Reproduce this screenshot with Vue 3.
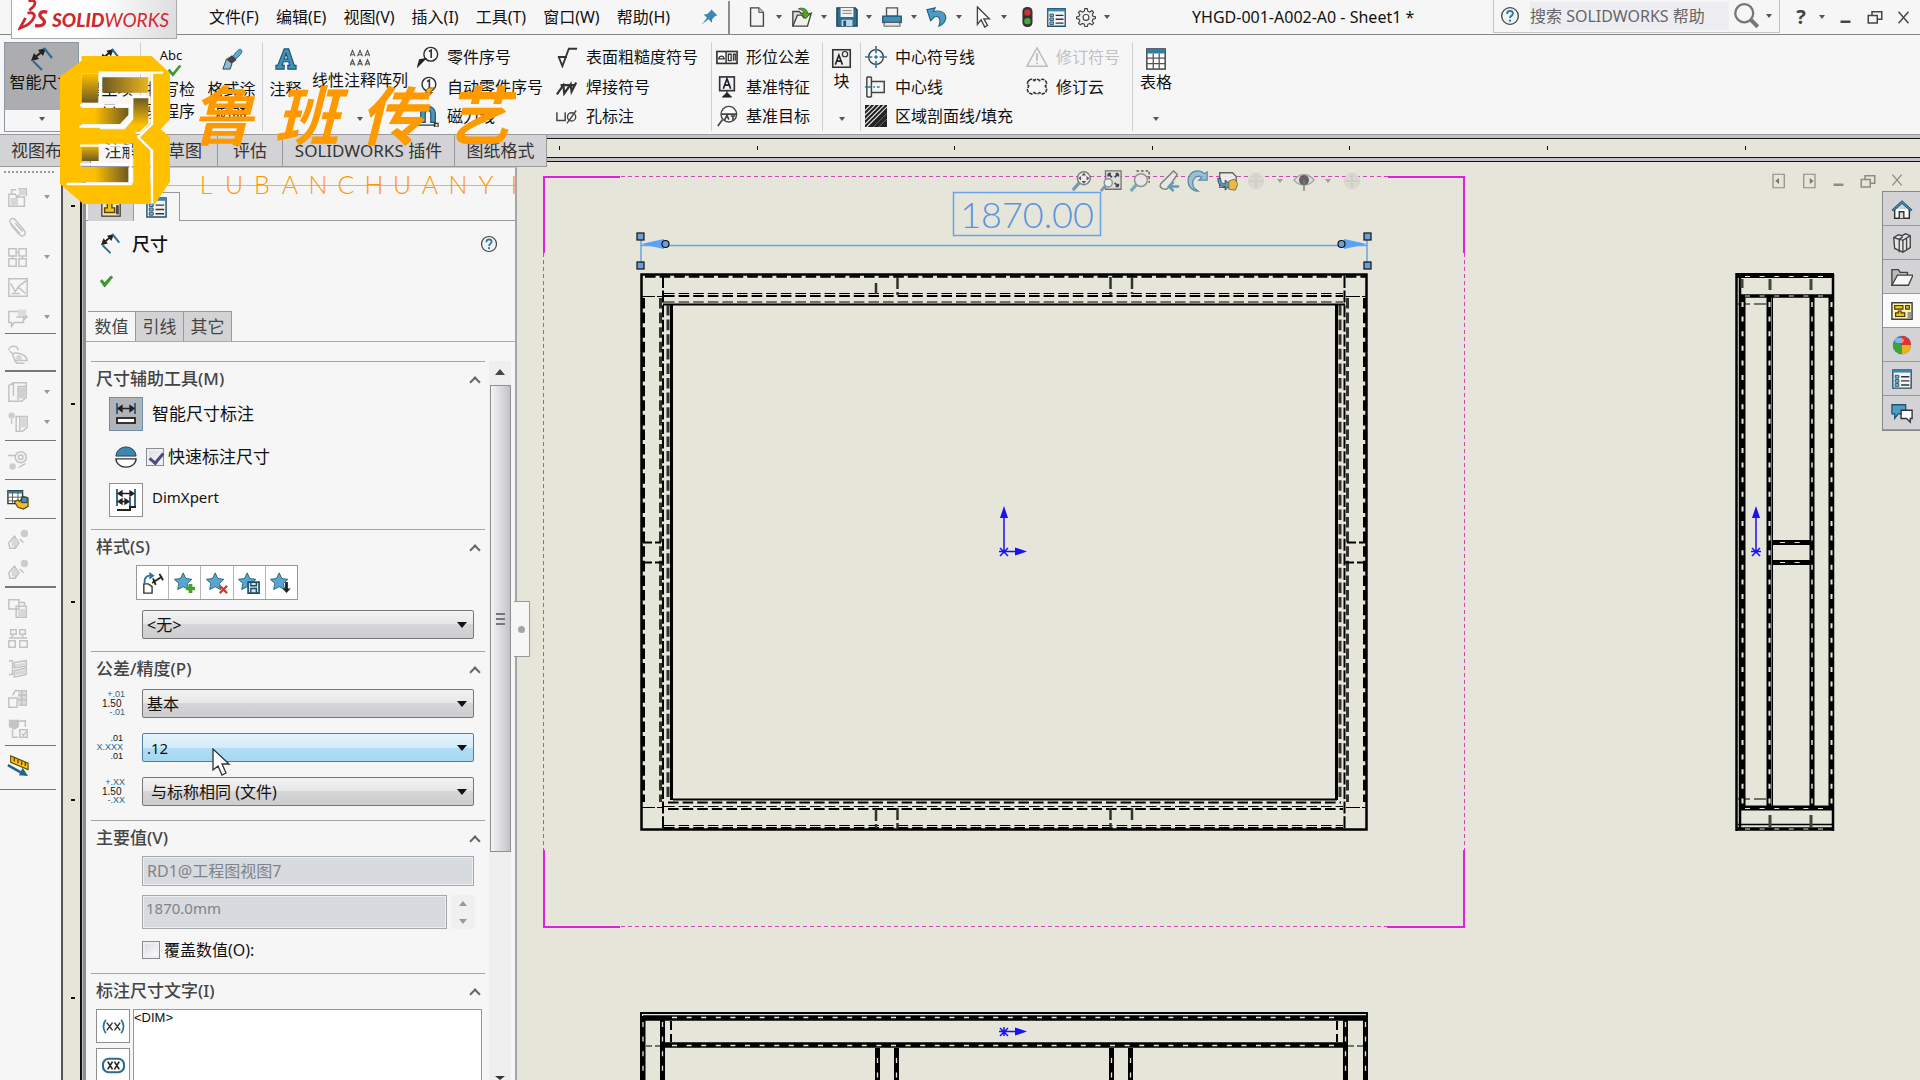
<script setup>
import { h } from 'vue'

const G = 'fill="none" stroke="#c2c2c4" stroke-width="1.6"'
const STAR = '<path d="M10 1l3 6.200 6.500.8-4.800 4.600 1.300 6.600L10 16l-6 3.200 1.300-6.600L.5 8 7 7.200z" fill="#58a6d0" stroke="#24617f" stroke-width="1"/>'
const icons = {
  pin: '<path d="M14 2l8 8-3 .5-4 4-.5 5-4.500-4.500L1 22l7-9-4.500-4.500 5-.5 4-4z" fill="#3f86b4"/>',
  new: '<path d="M5 2h9l5 5v15H5z" fill="#f4f4f4" stroke="#444" stroke-width="1.500"/><path d="M14 2v5h5" fill="#ccc" stroke="#444"/>',
  open: '<path d="M2 22V6h7l2 2h4v4" fill="#ddd" stroke="#444" stroke-width="1.500"/><path d="M2 22l5-12h5l2 3 8-5-4 14z" fill="#f1f1ee" stroke="#444" stroke-width="1.500"/><path d="M8 3c6-2 10 1 10 5h3l-5 6-5-6h3c0-3-3-4-6-5z" fill="#5aa02c" stroke="#2f6b12"/>',
  save: '<path d="M1 2h20l2 2v18H1z" fill="#2c6f92" stroke="#1d4358" stroke-width="1.500"/><path d="M5 2h14v10H5z" fill="#f2f2f2"/><path d="M7 5h10M7 8h10" stroke="#777"/><path d="M6 15h12v7H6z" fill="#b9d6e4"/><path d="M8 16h3v6H8z" fill="#24536b"/>',
  print: '<path d="M6 2h12v9H6z" fill="#f5f5f5" stroke="#555" stroke-width="1.500"/><path d="M2 11h20v7H2z" fill="#3f8fb8" stroke="#205470" stroke-width="1.500"/><path d="M4 18h16l1 4H3z" fill="#e6e6e6" stroke="#555"/>',
  undo: '<path d="M1 4l4 12 4-4c5-2 8 2 5 10 11-4 11-19-6-16l2-4z" fill="#4d9ac2" stroke="#235f80" stroke-width="1.200"/>',
  cursor: '<path d="M7 1v19l4-5 4 8 3-2-4-7h6z" fill="#fff" stroke="#444" stroke-width="1.500"/>',
  light: '<rect x="7" y="1" width="11" height="22" rx="5" fill="#333"/><circle cx="12.500" cy="7" r="3.500" fill="#d03030"/><circle cx="12.500" cy="16.500" r="3.500" fill="#4aa83a"/>',
  list: '<path d="M2 2h20v20H2z" fill="#f4f4f4" stroke="#24506a" stroke-width="1.500"/><path d="M2 2h20v3H2z" fill="#3b87ac"/><path d="M4.500 8h4v3h-4zM4.500 12.500h4v3h-4zM4.500 17h4v3h-4z" fill="#7fb9d6" stroke="#24506a"/><path d="M11 9.500h9M11 14h9M11 18.500h9" stroke="#333" stroke-width="1.500"/>',
  gear: '<path d="M10.500 2h3l.6 3 2.400 1 2.600-1.700 2 2L19.500 9l1 2.200 3 .6v2l-3 .7-1 2.300 1.700 2.600-2 2-2.700-1.600-2.300 1-.6 2.700h-3l-.6-2.800-2.300-1L5 21.400l-2-2 1.600-2.600-1-2.300-3-.6v-2l3-.7 1-2.200L3 6.400l2-2L7.600 6 10 5z" fill="#eee" stroke="#444" stroke-width="1.400"/><circle cx="12" cy="12.500" r="3.500" fill="#fff" stroke="#444" stroke-width="1.400"/>',
  help: '<circle cx="12" cy="12" r="10" fill="#eef4f7" stroke="#444" stroke-width="1.600"/><path d="M8.500 9.500c0-5 7-4.500 7-.5 0 2.500-3.500 3-3.500 5.500" fill="none" stroke="#2c7399" stroke-width="2.200"/><circle cx="12" cy="17.500" r="1.400" fill="#2c7399"/>',
  mag: '<circle cx="10" cy="10" r="8" fill="none" stroke="#777" stroke-width="2"/><path d="M16 16l6 6" stroke="#777" stroke-width="3.500"/>',
  smart: '<path d="M3 12L14 3" stroke="#222" stroke-width="2.200"/><path d="M1 14l3-8 5 6zM16 1l-3 8-5-6z" fill="#222"/><path d="M14 1l8 10M3 14l9 9" stroke="#2c6e92" stroke-width="2.200"/>',
  abc: '<path d="M8 14l5 6 9-11" fill="none" stroke="#3f9a2f" stroke-width="3.200"/>',
  brush: '<path d="M22 2c-1-2-4 0-9 7l3 3c6-5 8-8 6-10z" fill="#5aa9cf" stroke="#235b78"/><path d="M12 8l5 5-5 4-6-5z" fill="#444"/><path d="M6 12l6 5-2 6H2z" fill="#86bedb" stroke="#333"/>',
  note: '<path d="M10 1h5l6 18h2v4h-9v-4h2l-1-4H9l-1 4h2v4H1v-4h2zM12 6l-2 6h4z" fill="#3f93b8" stroke="#1d5068" stroke-width="1.200"/>',
  pat: '<path d="M0 10l3-7 3 7M1 8h4M9 10l3-7 3 7M10 8h4M18 10l3-7 3 7M19 8h4M0 21l3-7 3 7M1 19h4M9 21l3-7 3 7M10 19h4M18 21l3-7 3 7M19 19h4" fill="none" stroke="#555" stroke-width="1.300"/>',
  bal: '<circle cx="15" cy="9" r="7.500" fill="#fff" stroke="#333" stroke-width="1.600"/><path d="M13 6l2.500-1.500V13" fill="none" stroke="#333" stroke-width="1.800"/><path d="M9 14l-8 8 2-7z" fill="#222" stroke="#222" stroke-width="1.500"/>',
  abal: '<circle cx="13" cy="9" r="7.500" fill="#fff" stroke="#333" stroke-width="1.600"/><path d="M11 6l2.500-1.500V13" fill="none" stroke="#333" stroke-width="1.800"/><path d="M12 13h7l-5 5h3l-7 6 2-6H9z" fill="#f3b52c" stroke="#8a5a10"/>',
  magnet: '<path d="M4 19V9c0-10 16-10 16 0v10h-5V9c0-4-6-4-6 0v10z" fill="#4b97bb" stroke="#24536b" stroke-width="1.300"/><path d="M1 22h20M19 20h4v4h-4z" fill="#fff" stroke="#333" stroke-width="1.300"/>',
  surf: '<path d="M2 12h10M3 12l4 10 7-19h9" fill="none" stroke="#333" stroke-width="2"/>',
  weld: '<path d="M1 20l7-10 1 9 7-10 1 8 5-10M5 10h16" fill="none" stroke="#333" stroke-width="2.400"/>',
  hole: '<path d="M1 8v9h9V8" fill="none" stroke="#444" stroke-width="1.600"/><circle cx="17" cy="13" r="4.500" fill="none" stroke="#444" stroke-width="1.500"/><path d="M12 20L22 6" stroke="#444" stroke-width="1.500"/>',
  gtol: '<rect x="1" y="6" width="22" height="13" fill="#fff" stroke="#333" stroke-width="1.800"/><path d="M11 6v13" stroke="#333" stroke-width="1.600"/><path d="M3 14c1-4 5-4 6 0zM13.500 9h3v7h-3zM19 16V9h2v7" fill="none" stroke="#333" stroke-width="1.400"/>',
  datum: '<rect x="4" y="1" width="16" height="15" fill="#eef" stroke="#333" stroke-width="1.800"/><path d="M8 14l4-11 4 11M9 10h6" fill="none" stroke="#222" stroke-width="1.800"/><path d="M12 16v3M7 23l5-5 5 5z" fill="#222" stroke="#222"/>',
  target: '<circle cx="14" cy="10" r="8.500" fill="#fff" stroke="#444" stroke-width="1.500"/><path d="M6 10h17M9 17l3-6 2 5M16 12h5M18.500 12v5M7 16l-5 7" fill="none" stroke="#444" stroke-width="1.800"/>',
  block: '<rect x="2" y="2" width="20" height="20" fill="#eee" stroke="#333" stroke-width="1.800"/><path d="M5 19l4-11 4 11M6 15h6" fill="none" stroke="#222" stroke-width="1.800"/><circle cx="16" cy="7" r="3" fill="none" stroke="#333" stroke-width="1.400"/>',
  cmark: '<circle cx="12" cy="12" r="8" fill="none" stroke="#3a3a3a" stroke-width="1.500"/><path d="M12 0v8M12 16v8M0 12h8M16 12h8M12 10v4M10 12h4" stroke="#2b78a0" stroke-width="1.800"/>',
  cline: '<path d="M2 1v22M7 1v22M2 1h5M2 23h5M7 6h14v12H7" fill="none" stroke="#444" stroke-width="1.600"/><path d="M0 12h16" stroke="#2b78a0" stroke-width="1.500" stroke-dasharray="7 2 2 2"/>',
  hatch: '<rect width="24" height="24" fill="#222"/><path d="M0 6L6 0M0 11L11 0M0 16L16 0M0 21L21 0M2 24L24 2" stroke="#eee" stroke-width="1.200"/><path d="M9 24L24 9M15 24l9-9" stroke="#777" stroke-width="1"/>',
  warn: '<path d="M12 2l11 20H1z" fill="none" stroke="#bdbdbd" stroke-width="1.600"/><path d="M12 8v8M12 18v2" stroke="#bdbdbd" stroke-width="2"/>',
  cloud: '<path d="M3 5c2-2 4-2 6 0 2-2 4-2 6 0 2-2 4-2 6 0 2 2 2 4 0 6 2 2 2 5 0 7-2 2-4 2-6 0-2 2-4 2-6 0-2 2-4 2-6 0-2-2-2-4 0-7-2-2-2-4 0-6z" fill="none" stroke="#333" stroke-width="1.700" stroke-dasharray="4 1"/>',
  table: '<rect x="2" y="1" width="20" height="22" fill="#fff" stroke="#444" stroke-width="1.600"/><rect x="2" y="1" width="20" height="5" fill="#2d7fa6"/><path d="M2 11h20M2 17h20M9 6v17M15.500 6v17" stroke="#555" stroke-width="1.400"/>',
  tree: '<rect x="2" y="2" width="20" height="20" fill="#f6e9b0" stroke="#444" stroke-width="1.500"/><path d="M8 6h5v7h3v5H5v-5h3z" fill="#f2c21b" stroke="#5a4500" stroke-width="1.500"/><path d="M19 10v10" stroke="#444" stroke-width="3"/>',
  ok: '<path d="M2 11l3-2 4 5L19 3l3 2L9 21z" fill="#3c9f2c" stroke="#2a7a1d"/>',
  dimA: '<path d="M3 1v11M21 1v11" stroke="#2b5a78" stroke-width="1.800"/><path d="M4 6.500h16M4 6.500l4-3v6zM20 6.500l-4-3v6z" fill="#222" stroke="#222" stroke-width="1.300"/><rect x="3" y="16" width="18" height="5" fill="#fff" stroke="#222" stroke-width="1.800"/>',
  dimB: '<path d="M3 1v17M21 1v18M16 9v9" stroke="#2b5a78" stroke-width="1.800"/><path d="M4 5.500h16M4 5.500l4-2.500v5zM20 5.500l-4-2.500v5zM4 13.500h11M4 13.500l4-2.500v5zM15 13.500l-4-2.500v5z" fill="#222" stroke="#222" stroke-width="1.300"/><path d="M3 22h13v-3h6" fill="none" stroke="#222" stroke-width="2"/>',
  half: '<path d="M1 11a11 10 0 0122 0z" fill="#3c87aa" stroke="#235"/><path d="M1 14h22a11 9 0 01-22 0z" fill="#fff" stroke="#333" stroke-width="1.500"/>',
  s1: '<path d="M3 12C2 6 6 3 11 4M8 1l4 3-4 3" fill="none" stroke="#2c7399" stroke-width="2"/><path d="M2 13h5l4 3v7H2z" fill="#fff" stroke="#333" stroke-width="1.500"/><path d="M11 12L22 5M12 7l3 7M19 2l4 7" stroke="#222" stroke-width="2"/>',
  s2: STAR + '<path d="M16 13h4v3h3v4h-3v3h-4v-3h-3v-4h3z" fill="#4aa02c"/>',
  s3: STAR + '<path d="M15 15l8 8M23 15l-8 8" stroke="#d43a24" stroke-width="2.500"/>',
  s4: STAR + '<path d="M11 11h12v12H11z" fill="#cfe2ee" stroke="#1f4d68" stroke-width="1.800"/><path d="M14 11v4h6v-4M14 23v-5h6v5" fill="none" stroke="#1f4d68" stroke-width="1.500"/>',
  s5: STAR + '<path d="M18 11v8" stroke="#222" stroke-width="3"/><path d="M13.500 18h9L18 23z" fill="#222"/>',
  px: '<path d="M4 5q-5 7 0 14M20 5q5 7 0 14" fill="none" stroke="#2c7399" stroke-width="1.800"/><path d="M5 8l6 8M11 8l-6 8M13 8l6 8M19 8l-6 8" stroke="#333" stroke-width="1.500"/>',
  bx: '<rect x="1" y="5" width="22" height="14" rx="6" fill="none" stroke="#2c6e92" stroke-width="2.200"/><path d="M6 8l5 8M11 8l-5 8M13 8l5 8M18 8l-5 8" stroke="#222" stroke-width="1.700"/>',
  home: '<path d="M4 12v10h16V12" fill="#fff" stroke="#333" stroke-width="1.600"/><path d="M1 13L12 3l11 10-2 1-9-8-9 8z" fill="#3b8fb5" stroke="#1d4a61"/><path d="M9 22v-7h5v7" fill="#ddd" stroke="#333" stroke-width="1.500"/>',
  books: '<path d="M3 6l5-3 4 1 4-2 5 2v13l-8 5-9-4z" fill="#e8e8e8" stroke="#444" stroke-width="1.500"/><path d="M3 6l6 2v14M9 8l4-3M13 9v13M9 8l4 1 8-5M17 6v13" fill="none" stroke="#444" stroke-width="1.500"/>',
  folder: '<path d="M1 21V4h7l2 3h8v4" fill="#bbb" stroke="#444" stroke-width="1.500"/><path d="M1 21L7 10h17l-5 11z" fill="#f7f7f7" stroke="#444" stroke-width="1.500"/>',
  pal: '<rect x="1" y="3" width="22" height="18" fill="#fff3c0" stroke="#333" stroke-width="1.500"/><path d="M4 6h9v4H4zM16 6h4v4h-4zM5 18v-4h3v-2h3v2h4v4z" fill="#f0bf1a" stroke="#4b3a00" stroke-width="1.300"/><path d="M18 13h4v7h-4z" fill="#999"/>',
  ball: '<circle cx="12" cy="12" r="10" fill="#2f78c4"/><path d="M12 12V2a10 10 0 0110 10z" fill="#d33"/><path d="M12 12h10a10 10 0 01-10 10z" fill="#e9b41e"/><path d="M12 12v10A10 10 0 012.500 9z" fill="#3fa23a"/><ellipse cx="9" cy="7" rx="5" ry="3" fill="#fff" opacity=".45"/>',
  chat: '<path d="M1 3h15v10H8l-4 5v-5H1z" fill="#4d9fc8" stroke="#205470" stroke-width="1.400"/><path d="M11 9h12v9h-2v4l-4-4h-6z" fill="#fff" stroke="#333" stroke-width="1.500"/>',
  g1: `<path d="M2 9h7l2 3h8v10H2zM12 3h9v8M9 14l6-6M5 9V4h5" ${G}/><path d="M4 13h8v8H4zM13 4h7v6h-7z" fill="#d6d6d8"/>`,
  g2: `<path d="M4 9l9 11c4 4 9 0 6-4L9 4C6 1 1 4 4 8l10 11M9 8l8 9" ${G}/>`,
  g3: `<path d="M2 3h8v8H2zM13 3h8v8h-8zM2 14h8v8H2zM13 14h8v8h-8zM10 7h3M6 11v3M17 11v3" ${G}/>`,
  g4: `<path d="M2 3h20v19H2zM4 8l5 9 4-6 8-6M12 12l8 7M5 19h9" ${G}/>`,
  g5: `<path d="M2 6h12l4 4v8H8l-3 4v-4H2zM10 12h11M17 7l5 5-5 4" ${G}/><path d="M12 4h9v7h-9z" fill="#dcdcde"/>`,
  g6: `<path d="M2 8c0-6 10-6 10 0M3 9l4 3M6 13c0-4 15-2 16 6H9zM8 19l3 3h8" ${G}/><circle cx="13" cy="16" r="3" fill="#d5d5d7"/>`,
  g7: `<path d="M2 5l5-3h14v16l-5 4H2zM7 2v14M12 6h9M12 10h9M12 6v15" ${G}/><path d="M13 7h7v12h-7z" fill="#d0d0d3"/>`,
  g8: `<circle cx="5" cy="5" r="3.500" fill="#cfcfd2"/><path d="M10 6h12v12l-5 4h-7zM14 6v15M5 9v5" ${G}/><path d="M15 7h6v11h-6z" fill="#d8d8da"/>`,
  g9: `<circle cx="15" cy="9" r="6" ${G}/><circle cx="15" cy="9" r="2.500" ${G}/><circle cx="6" cy="19" r="3.500" fill="#ccc"/><path d="M1 7h8M13 20l7-4" ${G}/>`,
  g10: `<circle cx="19" cy="6" r="4" fill="#ccc"/><path d="M2 16l6-7 5 7-4 6H3zM9 9v12M14 12l4 4" ${G}/><path d="M5 14l4-3 3 5-3 4H5z" fill="#d8d8da"/>`,
  g11: `<path d="M2 3h11v10H2zM10 10h11v12H10zM13 6h6v4" ${G}/><path d="M12 13h8v8h-8z" fill="#d8d8da"/>`,
  g12: `<path d="M4 3h6v5H4zM14 3h6v5h-6zM2 12h20M6 8v4M17 8v4M2 15h7v7H2zM14 15h8v7h-8z" ${G}/>`,
  g13: `<path d="M2 4h4v15H2M8 6l13-2v6L8 12zM8 15l13-3v7L8 22z" ${G}/><path d="M9 8l11-2v3L9 11zM9 16l11-2v4L9 20z" fill="#d8d8da"/>`,
  g14: `<path d="M2 12h9v10H2zM9 4h12v16h-8M6 9l4-6M12 9h9M12 14h9M16 4v16" ${G}/><path d="M12 5h8v14h-8z" fill="#c2c2c4" opacity=".5"/>`,
  g15: `<path d="M2 3h11v8l-5 3-6-3z" fill="#c4c4c6"/><path d="M11 5l9-1v7M6 14v8h6M14 14h8v8h-8zM16 18l2 2 3-4" ${G}/>`,
  tcfg: '<path d="M1 3h16v14H1z" fill="#fff" stroke="#333" stroke-width="1.500"/><path d="M1 3h16v3H1z" fill="#2d7fa6"/><path d="M1 10h16M1 14h16M6 3v14M12 3v14" stroke="#555"/><path d="M8 15l4-2 2 2 3-6 6 2v9l-5 3-6-2z" fill="#f1bf24" stroke="#5f4700" stroke-width="1.300"/><path d="M16 10h6v6h-6z" fill="#3f93c4" stroke="#235"/>',
  rulr: '<path d="M4 1l19 8v7L4 8z" fill="#f6c51f" stroke="#6b5000" stroke-width="1.300"/><path d="M8 3v4M12 5v4M16 7v4M20 8v4" stroke="#5b4400" stroke-width="1.500"/><path d="M1 11l14 8" stroke="#24648a" stroke-width="3"/><path d="M13 22l10 1-6-9z" fill="#24648a"/>',
  z1: '<path d="M9 14l-7 8" stroke="#6f93a8" stroke-width="3.500"/><circle cx="14" cy="9" r="7" fill="#eee" stroke="#777" stroke-width="1.600"/><path d="M14 3l2.500 3h-5zM14 15l2.500-3h-5zM8 9l3-2.500v5zM20 9l-3-2.500v5z" fill="#444"/>',
  z2: '<path d="M6 1h17v20H6z" fill="#ddd" stroke="#666" stroke-width="1.400"/><path d="M9 4l4 4M20 4l-4 4M20 18l-4-4M9 4h3M9 4v3M20 4h-3M20 4v3M20 18v-3M20 18h-3" stroke="#333" stroke-width="1.800"/><circle cx="9" cy="14" r="4.500" fill="#eee" stroke="#888" stroke-width="1.500"/><path d="M6 17l-5 6" stroke="#6f93a8" stroke-width="3"/>',
  z3: '<path d="M8 1h14v13" fill="none" stroke="#555" stroke-width="1.600" stroke-dasharray="3 2"/><circle cx="13" cy="11" r="7" fill="#e8e8e4" stroke="#888" stroke-width="1.600"/><path d="M8 16l-6 7" stroke="#6fa3b8" stroke-width="3.500"/>',
  z4: '<path d="M3 15L17 1l4 4-9 13c-2 5-12 3-9-3z" fill="#e8e8e4" stroke="#777" stroke-width="1.600"/><path d="M23 18h-9M17 13l-5 5 5 5" fill="none" stroke="#5895ae" stroke-width="2.800"/>',
  z5: '<path d="M22 2v9h-9l3-3C10 4 3 12 8 20l4 3C-3 22-2 1 12 1c3 0 5 1 7 3z" fill="#8fbfd6" stroke="#4d7f98" stroke-width="1.300"/>',
  z6: '<path d="M4 3h14l4 4v12H4z" fill="#eee" stroke="#555" stroke-width="1.500"/><path d="M2 9c0 8 4 9 8 9v4l6-6-6-5v4c-3 0-5-1-5-6z" fill="#4d93b2" stroke="#235"/><path d="M14 12l6-2 4 5-3 7-7-1z" fill="#e8b542" stroke="#86600f"/>',
  z7: '<circle cx="12" cy="12" r="9" fill="#d8d8ce"/><path d="M12 3v18M4 12h16" stroke="#cacabf" stroke-width="1.500"/>',
  eye: '<path d="M1 11c6-8 16-8 22 0-6 7-16 7-22 0z" fill="#ddd" stroke="#999" stroke-width="1.400"/><circle cx="12" cy="11" r="5.500" fill="#555"/><path d="M12 11v12" stroke="#777" stroke-width="1.500"/>',
  wl: '<path d="M4 3h15v18H4z" fill="none" stroke="#8c8c84" stroke-width="1.600"/><path d="M12 8l-5 4 5 4z" fill="#777"/>',
  wr: '<path d="M5 3h15v18H5z" fill="none" stroke="#8c8c84" stroke-width="1.600"/><path d="M13 8l5 4-5 4z" fill="#777"/>',
  min: '<path d="M5 18h14" stroke="currentColor" stroke-width="3.500"/>',
  rest: '<path d="M3 10h12v10H3zM8 10V5h13v10h-6" fill="none" stroke="currentColor" stroke-width="2"/>',
  cls: '<path d="M5 4l14 16M19 4L5 20" stroke="currentColor" stroke-width="2" fill="none"/>'
}
const Ic = (p) => h('svg', { viewBox: '0 0 24 24', width: p.s || 20, height: p.s || 20, 'aria-hidden': 'true', innerHTML: icons[p.n] })
Ic.props = ['n', 's']

const menus = ['文件(F)', '编辑(E)', '视图(V)', '插入(I)', '工具(T)', '窗口(W)', '帮助(H)']
const quick = [['new', '新建'], ['open', '打开'], ['save', '保存'], ['print', '打印'], ['undo', '撤消'], ['cursor', '选择']]
const cols = [
  { cls: 'c1', items: [['bal', '零件序号'], ['abal', '自动零件序号'], ['magnet', '磁力线']] },
  { cls: 'c2 line', items: [['surf', '表面粗糙度符号'], ['weld', '焊接符号'], ['hole', '孔标注']] },
  { cls: 'c3 line', items: [['gtol', '形位公差'], ['datum', '基准特征'], ['target', '基准目标']] }
]
const cols2 = [
  { cls: 'c4', items: [['cmark', '中心符号线'], ['cline', '中心线'], ['hatch', '区域剖面线/填充']] },
  { cls: 'c5 line', items: [['warn', '修订符号', true], ['cloud', '修订云']] }
]
const tabs = [['视图布局', 't1'], ['注解', 't2 on'], ['草图', 't3'], ['评估', 't3'], ['SOLIDWORKS 插件', 't5'], ['图纸格式', 't6']]
const side = [
  [['g1', 1], ['g2'], ['g3', 1], ['g4'], ['g5', 1]],
  [['g6']],
  [['g7', 1], ['g8', 1]],
  [['g9']],
  [['tcfg']],
  [['g10'], ['g10']],
  [['g11'], ['g12'], ['g13'], ['g14'], ['g15']],
  [['rulr']]
]
const hud = ['z1', 'z2', 'z3', 'z4', 'z5', 'z6', 'z7', '', 'eye', '', 'z7']
const pane = ['home', 'books', 'folder', 'pal', 'ball', 'list', 'chat']
const tols = [
  { id: 'kind', v: '基本', a: '+.01', b: '1.50', c: '-.01', k: 'tb' },
  { id: 'prec', v: '.12', a: '.01', b: 'X.XXX', c: '.01', k: 'ta' },
  { id: 'tprec', v: '与标称相同 (文件)', a: '+.XX', b: '1.50', c: '-.XX', k: 'tb' }
]
</script>

<template>
  <div class="app">
    <header class="title">
      <a class="brand" href="#" aria-label="SOLIDWORKS">
        <svg width="34" height="34" viewBox="0 0 36 34" fill="none" stroke="#cc2a30">
          <path d="M11 1c8-2 10 3 1 10" stroke-width="3" />
          <path d="M10 14c12-3 9 10-8 16L8 19" stroke-width="3" />
          <path d="M31 13c-8-2-10 3-5 7s0 9-8 7" stroke-width="3.500" />
        </svg>
        <span><b>SOLID</b><i>WORKS</i></span>
      </a>
      <nav class="menus"><button v-for="m in menus" :key="m">{{ m }}</button></nav>
      <button class="pin" aria-label="固定"><Ic n="pin" s="18" /></button>
      <div class="quick">
        <button v-for="q in quick" :key="q[0]" :aria-label="q[1]"><Ic :n="q[0]" s="22" /><i class="dn"></i></button>
        <button class="solo" aria-label="重建"><Ic n="light" s="22" /></button>
        <button class="solo" aria-label="属性"><Ic n="list" s="21" /></button>
        <button aria-label="选项"><Ic n="gear" s="20" /><i class="dn"></i></button>
      </div>
      <h1>YHGD-001-A002-A0 - Sheet1 *</h1>
      <form class="search" @submit.prevent>
        <Ic n="help" s="20" />
        <input type="text" placeholder="搜索 SOLIDWORKS 帮助" aria-label="搜索" />
        <Ic n="mag" s="27" /><i class="dn"></i>
      </form>
      <div class="wins">
        <button class="q">?</button><i class="dn"></i>
        <button aria-label="最小化"><Ic n="min" s="17" /></button>
        <button aria-label="还原"><Ic n="rest" s="18" /></button>
        <button aria-label="关闭"><Ic n="cls" s="17" /></button>
      </div>
    </header>

    <section class="ribbon">
      <button class="big smart"><span class="face"><Ic n="smart" s="24" /><em>智能尺寸</em></span><i class="dn"></i></button>
      <button class="big model line two"><Ic n="smart" s="22" /><em>模型项<br />目</em></button>
      <button class="big spell two"><span class="abc">Abc<Ic n="abc" s="20" /></span><em>拼写检<br />验程序</em></button>
      <button class="big paint line two"><Ic n="brush" s="22" /><em>格式涂<br />刷器</em></button>
      <button class="big ann two"><Ic n="note" s="22" /><em>注释</em></button>
      <button class="big arr"><Ic n="pat" s="20" /><em>线性注释阵列</em><i class="dn"></i></button>
      <div v-for="c in cols" :key="c.cls" class="col" :class="c.cls">
        <button v-for="i in c.items" :key="i[1]"><Ic :n="i[0]" s="22" />{{ i[1] }}</button>
      </div>
      <button class="big blk line"><Ic n="block" s="21" /><em>块</em><i class="dn"></i></button>
      <div v-for="c in cols2" :key="c.cls" class="col" :class="c.cls">
        <button v-for="i in c.items" :key="i[1]" :disabled="i[2]"><Ic :n="i[0]" s="22" />{{ i[1] }}</button>
      </div>
      <button class="big tbl"><Ic n="table" s="22" /><em>表格</em><i class="dn"></i></button>
    </section>

    <div class="tabrow">
      <nav class="tabs"><button v-for="t in tabs" :key="t[0]" :class="t[1]">{{ t[0] }}</button></nav>
      <div class="hruler">
        <svg width="100%" height="24">
          <rect v-for="n in 7" :key="n" :x="12 + Math.round((n - 1) * 197.6)" y="8" width="1" height="4" fill="#111" />
        </svg>
      </div>
    </div>

    <main class="work">
      <aside class="tools">
        <div class="dots"></div>
        <div v-for="(g, gi) in side" :key="gi" class="tg" :class="'tg' + gi">
          <button v-for="(t, ti) in g" :key="ti" :aria-label="'工具 ' + gi + ti"><Ic :n="t[0]" s="22" /><i v-if="t[1]" class="dn"></i></button>
        </div>
      </aside>
      <div class="vruler">
        <i v-for="n in 5" :key="n"></i>
      </div>

      <section class="panel">
        <div class="strip"></div>
        <div class="ptabs">
          <button aria-label="设计树"><Ic n="tree" s="22" /></button>
          <button class="on" aria-label="属性"><Ic n="list" s="23" /></button>
        </div>
        <div class="phead"><Ic n="smart" s="21" /><h2>尺寸</h2><Ic n="help" s="18" /></div>
        <button class="ok" aria-label="确定"><Ic n="ok" s="15" /></button>
        <div class="vtabs"><button class="on">数值</button><button>引线</button><button>其它</button></div>
        <div class="body">
          <div class="groups">
            <section class="grp ga">
              <h3>尺寸辅助工具(M)<i class="up"></i></h3>
              <button class="mode on"><span><Ic n="dimA" s="24" /></span>智能尺寸标注</button>
              <div class="rapid"><Ic n="half" s="22" /><input id="rapid" type="checkbox" checked /><label for="rapid">快速标注尺寸</label></div>
              <button class="mode dx"><span><Ic n="dimB" s="24" /></span><em>DimXpert</em></button>
            </section>
            <section class="grp gb">
              <h3>样式(S)<i class="up"></i></h3>
              <div class="stars"><button v-for="n in 5" :key="n" :aria-label="'样式 ' + n"><Ic :n="'s' + n" s="22" /></button></div>
              <label class="sel"><select aria-label="样式"><option>&lt;无&gt;</option></select></label>
            </section>
            <section class="grp gc">
              <h3>公差/精度(P)<i class="up"></i></h3>
              <div v-for="t in tols" :key="t.id" class="tol">
                <label :for="t.id" :class="t.k"><span>{{ t.a }}</span><b>{{ t.b }}</b><span>{{ t.c }}</span></label>
                <span class="sel" :class="t.id"><select :id="t.id"><option>{{ t.v }}</option></select></span>
              </div>
            </section>
            <section class="grp gd">
              <h3>主要值(V)<i class="up"></i></h3>
              <input class="f1" type="text" value="RD1@工程图视图7" aria-label="名称" disabled />
              <div class="spin"><input type="text" value="1870.0mm" aria-label="数值" disabled /><span><i></i><i></i></span></div>
              <div class="over"><input id="over" type="checkbox" /><label for="over">覆盖数值(O):</label></div>
            </section>
            <section class="grp ge">
              <h3>标注尺寸文字(I)<i class="up"></i></h3>
              <div class="dimtext">
                <div><button aria-label="括号"><Ic n="px" s="23" /></button><button aria-label="检查"><Ic n="bx" s="23" /></button></div>
                <textarea aria-label="标注尺寸文字" value="<DIM>"></textarea>
              </div>
            </section>
          </div>
          <div class="sbar"><i class="su"></i><div class="thumb"><i></i><i></i><i></i></div><i class="sd"></i></div>
        </div>
        <button class="handle" aria-label="折叠"><i></i></button>
      </section>

      <section class="canvas">
        <svg class="draw" viewBox="517 167 1403 913" preserveAspectRatio="xMinYMin slice">
          <g fill="none" stroke="#cf48b4">
            <path d="M544 176.500H1465M544 926.500H1465M543.500 176V927M1464.500 176V927" stroke-dasharray="4 3" stroke-width="1" />
            <path d="M544 253V177H620M1388 177H1464V253M1464 850V927H1387M620 927H544V850" stroke-width="2" stroke="#e01fe0" />
          </g>
          <g fill="none" stroke="#68a4e6">
            <rect x="953.500" y="192.500" width="147" height="43" stroke-width="1.500" />
            <path d="M641 245.500H1367M641 238V266M1367 238V266" stroke-width="1.500" />
            <path d="M641 244L664 239V249zM1367 244L1344 239V249z" fill="#5aa2f5" stroke="none" />
          </g>
          <text x="1027" y="228" text-anchor="middle" class="dimtxt">1870.00</text>
          <g fill="#6c9fd8" stroke="#111" stroke-width="1.200">
            <rect x="637" y="233" width="7" height="7" /><rect x="637" y="262" width="7" height="7" />
            <rect x="1364" y="233" width="7" height="7" /><rect x="1364" y="262" width="7" height="7" />
            <circle cx="665.500" cy="244" r="3.500" /><circle cx="1341.500" cy="244" r="3.500" />
          </g>

          <g fill="none" stroke="#000">
            <rect x="641.500" y="274.500" width="725" height="555" stroke-width="2.500" />
            <path d="M663 304.500H1345M673 799.500H1337" stroke-width="2" />
            <path d="M671.500 304V800M1336.500 304V800" stroke-width="3" />
            <g stroke-dasharray="10.600 4">
              <path d="M645 276.500H1366" stroke-width="2.500" />
              <path d="M664 293.500H1343M664 302H1343M664 825.500H1343M664 806.500H1343" stroke-width="1.200" />
              <path d="M664 296H1343M668 802.500H1341M668 809H1343M664 828H1343" stroke-width="2" />
              <path d="M643.500 298V802M1364.500 298V802" stroke-width="3" />
              <path d="M660.500 298V802M1347.500 298V802M668 305V797M1340 305V797" stroke="#33332e" stroke-width="3" />
            </g>
            <path d="M663 276V830M1344.500 276V830" stroke-width="2" stroke-dasharray="12 2.600" />
            <path d="M641 296.500H662M1346 296.500H1366M641 807.500H662M1346 807.500H1366" stroke-width="1.200" stroke-dasharray="14 2" />
            <path d="M643 542.500H661M643 562.500H663M1347 542.500H1366M1345 562.500H1366" stroke-dasharray="9 3" stroke-width="1.800" />
            <path d="M876 283V294M897.500 277V295M1110.500 277V295M1132 277V294M876 809V828M897.500 808V828M1110.500 808V828M1132 808V820" stroke="#33332e" stroke-width="2.500" stroke-dasharray="12 3" />
          </g>

          <g fill="none" stroke="#000">
            <path d="M1736.500 273V831M1740 274V830" stroke-width="2.500" />
            <path d="M1743 295V808M1769 295V808M1812 295V808" stroke-width="5" />
            <path d="M1772.500 296V807" stroke-width="1" />
            <path d="M1831 295V808" stroke-width="5" />
            <path d="M1833 274V831" stroke-width="2.500" />
            <path d="M1736 275.500H1834M1740 808H1832" stroke-width="5" />
            <path d="M1740 296H1832M1736 829H1834" stroke-width="3.500" />
            <path d="M1738 824.500H1832" stroke-width="1.500" />
            <path d="M1772 542.500H1812M1772 562.500H1812" stroke-width="5" />
            <path d="M1738 304H1771M1738 799H1771" stroke-dasharray="12 4" />
            <path d="M1770 279V290M1811 279V290M1770 815V827M1811 815V827M1742 279V288" stroke-width="3" stroke="#44443e" />
          </g>
          <g fill="none" stroke="#e5e5da" stroke-dasharray="5 9.600">
            <path d="M1742.500 302V806M1769.500 302V806M1831.500 302V804" stroke-width="2" />
            <path d="M1812 302V806" stroke="#aaa" stroke-width="2" />
            <path d="M1745 276.500H1830M1745 296H1830M1745 808.500H1830M1745 829H1830" stroke-width="1.200" />
            <path d="M1780 542.500H1808M1780 562.500H1808" stroke-width="1.200" />
          </g>

          <g fill="none" stroke="#000">
            <path d="M641 1080V1013H1367V1080" stroke-width="2" />
            <path d="M643 1018H1366M664 1045H1344" stroke-width="5.500" />
            <path d="M643 1016V1080M662.500 1016V1080M877.500 1048V1080M896.500 1048V1080M1111.500 1048V1080M1130.500 1048V1080M1345.500 1016V1080M1365.500 1016V1080" stroke-width="5" />
            <path d="M671 1021V1042M1337 1021V1042" stroke-width="2" stroke-dasharray="9 4" />
            <path d="M646 1046H660M1348 1046H1363" stroke-dasharray="6 3" />
          </g>
          <g fill="none" stroke="#e5e5da" stroke-dasharray="5 9.600" stroke-width="1.300">
            <path d="M672 1017.500H1340M672 1045.500H1340" />
            <path d="M643 1022V1080M662.500 1022V1080M877.500 1058V1080M896.500 1058V1080M1111.500 1058V1080M1130.500 1058V1080M1345.500 1022V1080M1365.500 1022V1080" />
          </g>

          <g stroke="#1a10f0" fill="#1a10f0" stroke-width="1.500">
            <path d="M1004 551.500V512M1004 551.500H1018M1000 548l8 8M1008 548l-8 8M999 551.500h10" />
            <path d="M1004 506l4 12h-8zM1027 551.500l-12 4v-8z" stroke="none" />
            <path d="M1756 551.500V512M1752 548l8 8M1760 548l-8 8M1751 551.500h10" />
            <path d="M1756 506l4 12h-8z" stroke="none" />
            <path d="M1004 1031.500H1018M1000 1028l8 8M1008 1028l-8 8M999 1031.500h10M1004 1027v9" />
            <path d="M1027 1031.500l-12 4v-8z" stroke="none" />
          </g>
        </svg>
        <div class="hud">
          <template v-for="(n, i) in hud" :key="i"><Ic v-if="n" :n="n" s="22" /><i v-else class="dn"></i></template>
        </div>
        <div class="docwin"><Ic n="wl" s="18" /><Ic n="wr" s="18" /><Ic n="min" s="17" /><Ic n="rest" s="18" /><Ic n="cls" s="16" /></div>
        <div class="pane"><button v-for="p in pane" :key="p" :class="{ on: p === 'pal' }" :aria-label="p"><Ic :n="p" s="22" /></button></div>
      </section>
    </main>

    <div class="mark">
      <svg width="110" height="148" viewBox="180 78 330 444">
        <defs>
          <linearGradient id="ga"><stop offset="0" stop-color="#6d5a22" /><stop offset="1" stop-color="#e8b420" /></linearGradient>
          <linearGradient id="gb"><stop offset="0.300" stop-color="#ffc000" /><stop offset="1" stop-color="#6d5a22" /></linearGradient>
          <linearGradient id="gv" x2="0" y2="1"><stop offset="0" stop-color="#6d5a22" /><stop offset="0.800" stop-color="#ffc000" /></linearGradient>
          <linearGradient id="gw" x2="0" y2="1"><stop offset="0" stop-color="#ffc000" /><stop offset="1" stop-color="#6d5a22" /></linearGradient>
        </defs>
        <path fill-rule="evenodd" fill="#ffc000" d="M245 78H455L510 130V268L482 297L510 322V455L465 522H250L180 462V140L245 92zM245 130H452V278L412 320L452 360V460H245V340H300V290H245z" />
        <path fill="#ffc000" d="M180 234H240V460H180zM240 298H400L415 322L445 350V365H400V341H240z" />
        <path fill="url(#gw)" d="M245 130H295V218H245z" />
        <path fill="url(#ga)" d="M307 142H445V188H307z" />
        <path fill="url(#gb)" d="M240 234H385V255L360 282H240z" />
        <path fill="url(#gv)" d="M400 205H445V280L418 306H380L374 298L400 268z" />
        <path fill="url(#gw)" d="M245 341H296V393H245z" />
        <path fill="url(#gb)" d="M240 411H385V457H240z" />
        <path fill="#ffc000" d="M400 350H450V475H400zM205 472H450V490H225z" />
        <g fill="none" stroke="#fff" stroke-width="7">
          <path d="M300 220V128H490M456 130V282L415 322L456 362V520M240 226H396V200H450M238 290H372L394 268V226M240 347H392V462H200M240 403H385" />
        </g>
      </svg>
      <div class="words">
        <p class="cn"><span v-for="c in '鲁班传艺'" :key="c">{{ c }}</span></p>
        <p class="en"><span v-for="(c, i) in 'LUBANCHUANYI'" :key="i">{{ c }}</span></p>
      </div>
    </div>
    <svg class="mouse" width="20" height="30" viewBox="0 0 20 30"><path d="M2 1V22L7 18L11 27L15 25L11 16H18z" fill="#fff" stroke="#333" stroke-width="1.300" /></svg>
  </div>
</template>

<style>
body { margin: 0; overflow: hidden; }
</style>

<style scoped>
* { box-sizing: border-box; }
.app { position: relative; display: flex; flex-direction: column; height: 100vh; overflow: hidden; background: #f6f6f7; color: #111; font: 16px/22px "Noto Sans", "Noto Sans CJK SC", sans-serif; }
button, input, select, textarea { font: inherit; color: inherit; margin: 0; padding: 0; border: 0; background: none; border-radius: 0; }
button { white-space: nowrap; }
svg { display: block; flex: none; }
em, i { font-style: normal; }
h1, h2, h3, p { margin: 0; font-weight: 400; }
.dn { display: block; flex: none; border: 3px solid transparent; border-top: 4px solid #555; border-bottom: 0; }

.title { display: flex; align-items: center; height: 35px; flex: none; border-bottom: 1px solid #85858a; padding: 0 4px 0 11px; }
.brand { position: relative; z-index: 2; align-self: flex-start; display: flex; align-items: center; width: 166px; height: 39px; margin-bottom: -5px; padding: 0 0 6px 6px; border: 1px solid #aaa; border-top: 0; background: linear-gradient(100deg, #fff 50%, #dcdcde); color: #d0282e; text-decoration: none; flex: none; }
.brand span { display: flex; margin-top: 8px; font: italic 19px/24px Lato, sans-serif; }
.brand b { font-weight: 900; }
.brand i { font-style: italic; font-weight: 400; }
.menus { display: flex; gap: 17px; margin-left: 32px; width: 492px; flex: none; }
.pin { width: 29px; height: 33px; display: flex; align-items: center; border-right: 2px solid #8c8c90; flex: none; }
.quick { display: flex; align-items: center; margin-left: 16px; flex: none; }
.quick button { display: flex; align-items: center; gap: 8px; width: 45px; }
.quick .solo { width: 30px; }
h1 { flex: 1; margin-left: 71px; font-size: 16px; white-space: nowrap; }
.search { display: flex; align-items: center; width: 287px; height: 33px; margin-bottom: 2px; padding: 0 6px; border: 1px solid #c4c4c8; border-top: 0; flex: none; }
.search input { width: 199px; height: 28px; margin: 0 4px 0 10px; background: #ededf2; color: #666; outline: 0; }
.search input::placeholder { color: #666; opacity: 1; }
.search .dn { margin-left: 6px; }
.wins { display: flex; align-items: center; padding-left: 14px; color: #444; flex: none; }
.wins button { width: 30px; display: flex; justify-content: center; }
.wins .q { width: 14px; font-size: 20px; font-weight: 700; }
.wins .dn { margin: 0 5px 0 11px; }
.wins button:last-child { width: 26px; }

.ribbon { display: flex; height: 100px; flex: none; padding: 7px 0 3px 4px; border-bottom: 1px solid #9a9a9f; }
.big { display: flex; flex-direction: column; align-items: center; position: relative; flex: none; padding-top: 6px; }
.big em { display: block; margin-top: 1px; line-height: 22px; }
.big > .dn { margin-top: auto; margin-bottom: 10px; }
.two em { margin-top: 8px; }
.line { border-right: 1px solid #d0d0d4; }
.smart { width: 75px; height: 90px; border: 1px solid #8b98a3; padding: 0; overflow: hidden; }
.face { display: flex; flex-direction: column; align-items: center; width: 73px; height: 67px; padding-top: 4px; background: #adadb0; }
.face em { margin-top: 0; }
.model { width: 62px; }
.spell { width: 60px; }
.paint { width: 62px; }
.ann { width: 45px; }
.arr { width: 104px; }
.abc { display: flex; flex-direction: column; align-items: flex-end; height: 22px; font-size: 13px; line-height: 14px; }
.abc svg { margin-top: -4px; }
.col { display: flex; flex-direction: column; flex: none; }
.col button { display: flex; align-items: center; gap: 8px; height: 30px; text-align: left; }
.col button:disabled { color: #c0c0c4; }
.c1 { width: 140px; padding-left: 5px; }
.c2 { width: 160px; padding-left: 4px; }
.c3 { width: 111px; padding-left: 4px; }
.blk { width: 38px; }
.c4 { width: 161px; padding-left: 4px; }
.c5 { width: 111px; padding-left: 4px; }
.tbl { width: 46px; }

.tabrow { display: flex; height: 32px; flex: none; background: #e5e5da; }
.tabs { display: flex; width: 547px; flex: none; border-bottom: 1px solid #9a9a9e; background: #d3d3d5; }
.tabs button { font-size: 17px; border-right: 1px solid #99999d; color: #333; flex: none; overflow: hidden; }
.t1 { width: 91px; }
.t2 { width: 62px; }
.t3 { width: 65px; }
.t5 { width: 172px; }
.t6 { width: 92px; }
.tabs .on { background: #f6f6f7; }
.hruler { flex: 1; height: 27px; border-top: 3px solid #c3c3c7; background: linear-gradient(#111 1px, #e5e5da 1px 19px, #111 19px 20px, #c3c3c7 20px 23px, #111 23px); min-width: 0; }
.hruler svg { overflow: hidden; }

.work { display: flex; flex: 1; min-height: 0; }
.tools { width: 61px; flex: none; background: #f6f6f7; }
.dots { height: 2px; margin: 4px 5px 9px 4px; background: repeating-linear-gradient(90deg, #999 0 2px, transparent 2px 4px); }
.tg { margin: 0 5px; border-bottom: 1px solid #77777a; }
.tg button { display: flex; align-items: center; width: 100%; height: 30px; padding-left: 2px; }
.tg .dn { margin-left: 15px; border-top-color: #999; }
.tg0 { height: 152px; }
.tg1 { height: 38px; padding-top: 5px; border-bottom-width: 2px; }
.tg2 { height: 69px; padding-top: 5px; }
.tg3 { height: 39px; padding-top: 4px; }
.tg4 { height: 39px; padding-top: 4px; }
.tg5 { height: 69px; padding-top: 5px; border-bottom-width: 2px; }
.tg6 { height: 158px; padding-top: 5px; }
.tg7 { height: 44px; padding-top: 5px; margin-left: 0; padding-left: 5px; }
.vruler { display: flex; flex-direction: column; gap: 196px; width: 25px; flex: none; padding: 38px 0 0 8px; border-left: 2px solid #555; border-right: 3px solid #8e8e92; background: linear-gradient(90deg, #e5e5da 17px, #111 17px 19px, #c3c3c7 19px); }
.vruler i { width: 4px; height: 2px; background: #111; flex: none; }

.panel { position: relative; display: flex; flex-direction: column; width: 431px; flex: none; border-right: 2px solid #a5a5a8; border-top: 1px solid #c8c8cc; background: #f6f6f7; }
.strip { height: 18px; flex: none; border-bottom: 1px solid #bbb; }
.ptabs { display: flex; height: 35px; flex: none; padding: 6px 0 0 2px; border-bottom: 1px solid #99999d; }
.ptabs button { width: 46px; height: 29px; display: flex; justify-content: center; align-items: center; background: #d3d3d5; border: 1px solid #99999d; border-width: 1px 1px 0 0; }
.ptabs .on { background: #f6f6f7; }
.phead { display: flex; align-items: center; height: 45px; flex: none; padding: 0 17px 0 14px; }
.phead h2 { flex: 1; margin-left: 11px; font-size: 18px; font-weight: 500; }
.ok { width: 40px; height: 30px; padding-left: 13px; flex: none; }
.vtabs { display: flex; height: 31px; margin-top: 15px; flex: none; padding-left: 2px; border-bottom: 1px solid #aaa; }
.vtabs button { width: 48px; background: #d3d3d5; border: 1px solid #99999d; border-left: 0; border-bottom: 0; font-size: 17px; color: #444; }
.vtabs .on { background: #f6f6f7; }
.body { display: flex; flex: 1; min-height: 0; margin-top: 19px; padding-left: 5px; }
.groups { width: 394px; overflow: hidden; flex: none; }
.grp { border-top: 1px solid #a5a5a8; }
.grp h3 { display: flex; align-items: center; justify-content: space-between; height: 35px; padding: 0 6px 1px 5px; font-size: 17px; font-weight: 500; color: #444; }
.up { width: 8px; height: 8px; border: 2px solid #666; border-width: 2px 0 0 2px; transform: rotate(45deg); margin-top: 5px; }
.ga { height: 168px; }
.gb { height: 122px; }
.gc { height: 169px; }
.gd { height: 153px; }
.mode { display: flex; align-items: center; gap: 9px; margin-left: 18px; height: 34px; font-size: 17px; }
.dx { font-size: 15px; align-items: flex-start; line-height: 28px; }
.mode span { display: flex; align-items: center; justify-content: center; width: 34px; height: 34px; border: 1px solid #8f8f93; background: #fff; }
.mode.on span { background: #b0b4b9; border-color: #6e8fa6; }
.rapid { display: flex; align-items: center; height: 52px; padding-left: 24px; font-size: 17px; }
.rapid input { margin-left: 9px; }
.rapid label, .over label { margin-left: 4px; }
input[type=checkbox] { appearance: none; width: 18px; height: 18px; border: 1px solid #8c8c94; background: linear-gradient(135deg, #d6d9de, #fff); box-shadow: inset 0 0 0 2px #eee; position: relative; flex: none; }
input[type=checkbox]:checked::after { content: ""; position: absolute; left: 5px; top: 1px; width: 6px; height: 11px; border: solid #4a4a8a; border-width: 0 3px 3px 0; transform: rotate(40deg); }
.stars { display: flex; margin-left: 45px; width: 162px; height: 35px; border: 1px solid #99999d; background: #fff; }
.stars button { flex: 1; display: flex; align-items: center; justify-content: center; border-right: 1px solid #b5b5b8; }
.stars button:last-child { border: 0; }
.sel { position: relative; display: block; width: 332px; height: 29px; flex: none; }
.gb .sel { margin: 10px 0 0 51px; }
.sel select { appearance: none; width: 100%; height: 29px; padding-left: 4px; border: 1px solid #77777a; border-radius: 2px; background: linear-gradient(#f3f3f3, #e6e6e7 50%, #d6d6d8 50%, #cdcdd0); font-size: 16px; line-height: 22px; }
.tprec select { padding-left: 8px; }
.prec select { border-color: #4d7f9f; background: linear-gradient(#e6f4fc, #d3ecfa 50%, #b2def5 50%, #a6d7f2); font-size: 15px; }
.sel::after { content: ""; position: absolute; right: 7px; top: 12px; border: 5px solid transparent; border-top: 6px solid #111; border-bottom: 0; pointer-events: none; }
.tol { display: flex; align-items: center; height: 29px; margin-bottom: 15px; }
.gc h3 { margin-bottom: 2px; }
.tol label { display: flex; flex-direction: column; align-items: flex-end; width: 34px; margin-right: 17px; font: 9px/9px "Liberation Sans", sans-serif; color: #2b6288; }
.tol label b { font-weight: 400; }
.tol label.tb b { align-self: flex-start; margin-left: 11px; font-size: 10px; color: #111; }
.tol label.ta { width: 32px; margin-right: 19px; }
.tol label.ta span { color: #111; }
.gd input[type=text] { display: block; height: 30px; width: 332px; padding: 0 4px 2px; border: 1px solid #a5a8ab; box-shadow: inset 0 0 0 1px #eceef0; background: #d7dade; color: #808488; font-size: 16px; }
.gd .f1 { margin-left: 51px; }
.spin { display: flex; gap: 4px; margin: 9px 0 12px 51px; }
.gd .spin input[type=text] { width: 305px; height: 34px; font-size: 15px; padding: 0 3px 8px; }
.spin span { display: flex; flex-direction: column; justify-content: space-between; align-items: center; width: 24px; height: 34px; padding: 6px 0 5px; background: #f0f0f1; }
.spin i { border: 4px solid transparent; border-bottom: 5px solid #999; border-top: 0; }
.spin i + i { border: 4px solid transparent; border-top: 5px solid #999; border-bottom: 0; }
.over { display: flex; align-items: center; height: 18px; margin-left: 51px; font-size: 16px; }
.dimtext { display: flex; gap: 3px; margin-left: 5px; }
.dimtext button { display: flex; align-items: center; justify-content: center; width: 34px; height: 34px; margin-bottom: 5px; border: 1px solid #8f8f93; background: #fff; }
.dimtext textarea { width: 349px; height: 100px; border: 1px solid #99999d; background: #fff; font: 13px/16px "Liberation Sans", sans-serif; resize: none; }
.sbar { display: flex; flex-direction: column; align-items: center; width: 22px; margin-left: 4px; background: #efeff0; }
.su { margin: 8px 0 10px; border: 5px solid transparent; border-bottom: 6px solid #444; border-top: 0; }
.sd { margin: auto 0 0; border: 5px solid transparent; border-top: 4px solid #333; border-bottom: 0; }
.thumb { display: flex; flex-direction: column; align-items: center; justify-content: center; gap: 3px; width: 21px; height: 467px; flex: none; border: 1px solid #8f8f93; background: linear-gradient(90deg, #f4f4f5, #dcdcdf 50%, #c2c2c6); }
.thumb i { width: 9px; height: 2px; background: #777; }
.handle { position: absolute; right: -15px; top: 433px; z-index: 2; display: flex; align-items: center; justify-content: center; width: 16px; height: 56px; border: 1px solid #99999d; border-left: 0; background: #f6f6f7; }
.handle i { width: 7px; height: 7px; border-radius: 50%; background: #a5a5a8; }

.canvas { position: relative; flex: 1; min-width: 0; overflow: hidden; background: #e5e5da; }
.draw { width: 100%; height: 100%; }
.dimtxt { font: 300 36px Lato, sans-serif; fill: #5a93e0; }
.hud { position: absolute; left: 554px; top: 3px; display: flex; align-items: center; gap: 7px; opacity: .9; }
.hud .dn { margin: 0 3px; border-top-color: #999; }
.docwin { position: absolute; right: 15px; top: 5px; display: flex; gap: 12px; color: #8c8c84; }
.pane { position: absolute; right: 0; top: 24px; width: 38px; border: 1px solid #88888c; border-right: 0; }
.pane button { display: flex; align-items: center; justify-content: center; width: 100%; height: 34px; background: #d3d3d5; border-bottom: 1px solid #99999d; }
.pane .on { background: #fafafa; }

.mark { position: absolute; left: 60px; top: 56px; z-index: 5; display: flex; width: 456px; overflow: hidden; pointer-events: none; color: #ff9900; }
.words { flex: none; margin-left: 20px; }
.cn { display: flex; gap: 21px; margin-top: 16px; font: italic 700 64px/80px "Noto Sans CJK SC", sans-serif; }
.en { display: flex; margin: 14px 0 0 2px; font: 300 25px/36px Lato, sans-serif; }
.en span { width: 28px; text-align: center; }
.mouse { position: absolute; left: 211px; top: 748px; z-index: 5; pointer-events: none; }
</style>
